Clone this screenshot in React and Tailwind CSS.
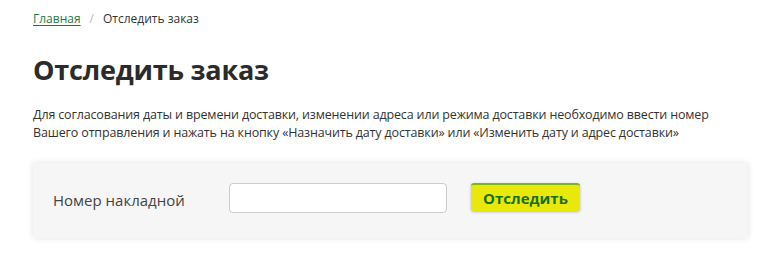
import React, { useState } from "react";

const App = () => {
  const [waybill, setWaybill] = useState("");

  return (
    <div className="min-h-[263px] bg-white px-[33px] pt-[10px] text-[#333]" style={{ fontFamily: '"Open Sans", "Noto Sans", sans-serif' }}>
      {/* Breadcrumb */}
      <nav className="flex items-center text-[12px] leading-[18px]">
        <a href="#" className="text-[#1f7a45] underline underline-offset-2">Главная</a>
        <span className="mx-[9px] text-[#bbb]">/</span>
        <span className="text-[#333]">Отследить заказ</span>
      </nav>

      <h1 className="mt-[24px] text-[27px] font-bold leading-[36px] tracking-[-0.2px] text-[#2b2b2b]">Отследить заказ</h1>

      <p className="mt-[18px] text-[12.5px] leading-[18px] tracking-[-0.15px] text-[#333]">
        Для согласования даты и времени доставки, изменении адреса или режима доставки необходимо ввести номер
        <br />
        Вашего отправления и нажать на кнопку «Назначить дату доставки» или «Изменить дату и адрес доставки»
      </p>

      {/* Form panel */}
      <div className="mt-[21px] flex h-[75px] w-[715px] items-start bg-[#f6f6f6] pl-[20px] pt-[20px] shadow-[0_0_6px_rgba(0,0,0,0.12)]">
        <label className="mt-[7px] w-[176px] text-[15px] leading-[20px] text-[#444]">Номер накладной</label>
        <input
          value={waybill}
          onChange={(e) => setWaybill(e.target.value)}
          className="h-[30px] w-[218px] rounded-[4px] border border-[#ccc] bg-white px-2 text-[14px] outline-none"
        />
        <button className="ml-[24px] h-[28px] w-[109px] rounded-[3px] border-t-2 border-[#7cb518] bg-[#e8e80a] text-[15px] font-bold text-[#1a701a] shadow-[0_1px_3px_rgba(0,0,0,0.25)]">
          Отследить
        </button>
      </div>
    </div>
  );
};

export default App;
